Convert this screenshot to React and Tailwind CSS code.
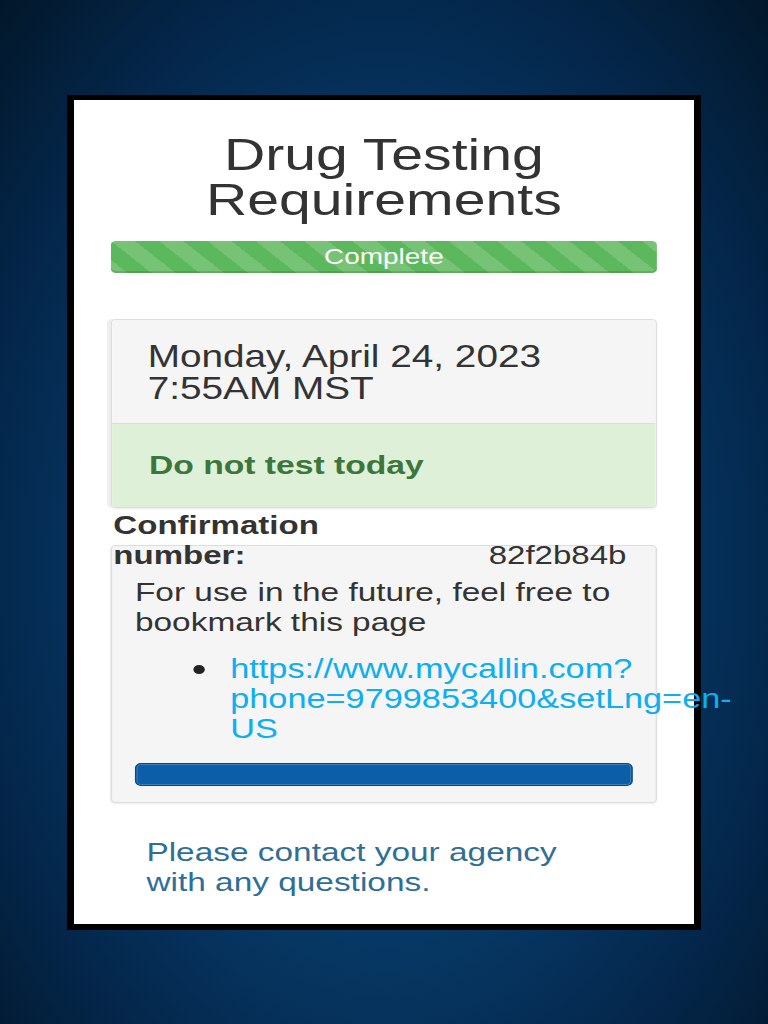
export default function App() {
  return (
    <div className="h-[1024px] w-full overflow-hidden bg-[radial-gradient(ellipse_at_50%_55%,#0a4b82_0%,#073d6c_40%,#04264a_75%,#021729_100%)] pt-[95px] font-['Liberation_Sans',Arial,sans-serif]">
      <div className="mx-auto w-[634px] bg-black px-[7px] pb-[6px] pt-[5px]">
        <div className="h-[824px] bg-white">
          {/* the reference is a stretched phone screenshot, so the content is widened */}
          <div className="w-[488px] origin-left scale-x-[1.27] pt-[32px]">
            <h1 className="text-center text-[45px] leading-[45px] text-[#333]">
              Drug Testing
              <br />
              Requirements
            </h1>

            <div className="mx-[29px] mt-[19px] h-[32px] rounded-[4px] bg-[#5cb85c] bg-[linear-gradient(45deg,rgba(255,255,255,.16)_25%,transparent_25%,transparent_50%,rgba(255,255,255,.16)_50%,rgba(255,255,255,.16)_75%,transparent_75%,transparent)] bg-[length:38px_38px] text-center text-[22px] leading-[32px] text-white shadow-[inset_0_-2px_0_rgba(0,0,0,.12)]">
              Complete
            </div>

            <div className="mx-[29px] mt-[46px] overflow-hidden rounded-[4px] border border-[#dddddd] shadow-[-3px_0_0_#eeeeee,0_1px_2px_rgba(0,0,0,.08)]">
              <div className="border-b border-[#dddddd] bg-[#f5f5f5] pb-[19px] pl-[28px] pt-[20px] text-[30.5px] leading-[32px] text-[#333]">
                Monday, April 24, 2023
                <br />
                7:55AM MST
              </div>
              <div className="bg-[#dff0d8] pb-[27px] pl-[29px] pt-[26px] text-[26.5px] font-bold leading-[30px] text-[#3c763d]">
                Do not test today
              </div>
            </div>

            <div className="relative z-10 ml-[31px] mr-[53px] mt-[2px] flex items-end justify-between text-[26px] leading-[30px] text-[#333]">
              <span className="w-[200px] font-bold">Confirmation number:</span>
              <span>82f2b84b</span>
            </div>

            <div className="-mt-[25px] mx-[29px] rounded-[4px] border border-[#dddddd] bg-[#f5f5f5] px-[18px] pb-[16px] pt-[31px] shadow-[0_1px_2px_rgba(0,0,0,.08)]">
              <p className="text-[26.3px] leading-[30px] text-[#333]">
                For use in the future, feel free to bookmark this page
              </p>
              <ul className="mt-[17px]">
                <li className="flex items-start">
                  <span className="ml-[46px] mr-[20px] mt-[11px] h-[9px] w-[9px] shrink-0 rounded-full bg-[#222]" />
                  <a className="whitespace-nowrap text-[27px] leading-[30px] text-[#0daef2]">
                    https://www.mycallin.com?
                    <br />
                    phone=9799853400&amp;setLng=en-
                    <br />
                    US
                  </a>
                </li>
              </ul>
              <div className="mt-[19px] h-[23px] rounded-[5px] border border-[#0a4683] bg-[#0c5ea8] shadow-[inset_0_0_0_1px_rgba(120,170,220,.45)]" />
            </div>

            <p className="ml-[57px] mt-[34px] w-[340px] text-[26.3px] leading-[30px] text-[#2f6f97]">
              Please contact your agency with any questions.
            </p>
          </div>
        </div>
      </div>
    </div>
  );
}
